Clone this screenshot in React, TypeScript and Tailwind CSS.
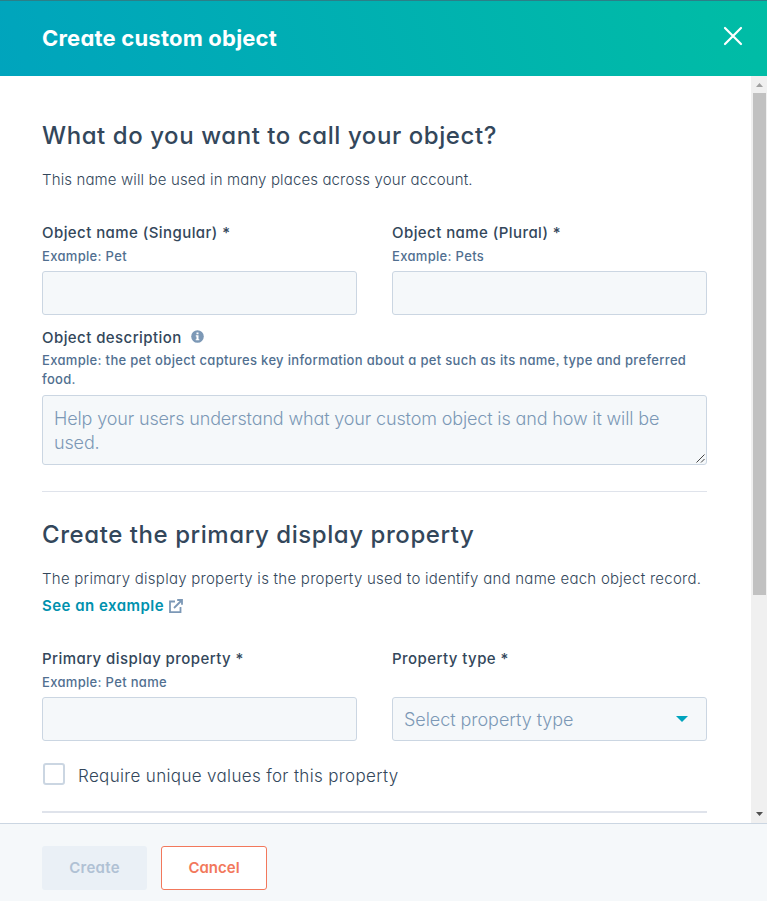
import type { ReactNode } from "react";
import cx from "clsx";

function Label(props: { children: ReactNode; className?: string }) {
  return (
    <label
      className={cx(
        "flex h-[22px] items-center whitespace-nowrap text-[15px] font-medium tracking-[0.43px] text-[#33475b]",
        props.className
      )}
    >
      {props.children}
    </label>
  );
}

function Help(props: { children: ReactNode; className?: string }) {
  return (
    <div
      className={cx(
        "whitespace-nowrap text-[13px] leading-[19px] font-medium tracking-[0.32px] text-[#516f90]",
        props.className
      )}
    >
      {props.children}
    </div>
  );
}

function Input() {
  return (
    <input className="block h-11 w-full rounded-[3px] border border-[#cbd6e2] bg-[#f5f8fa] px-[11px] outline-none" />
  );
}

function Scrollbar() {
  return (
    <div className="flex w-4 shrink-0 flex-col items-center bg-[#f0f0f0]">
      <svg width="16" height="17" viewBox="0 0 16 17">
        <path d="M5 11h7L8.500 7z" fill="#a0a0a0" />
      </svg>
      <div className="ml-px h-[502px] w-[13px] bg-[#c1c1c1]" />
      <svg className="mt-auto" width="16" height="17" viewBox="0 0 16 17">
        <path d="M5 6h7l-3.500 4z" fill="#505050" />
      </svg>
    </div>
  );
}

export default function App() {
  return (
    <div className="flex h-[901px] w-[767px] flex-col overflow-hidden bg-white font-[Inter,sans-serif] text-[#33475b] [font-feature-settings:'cv11','ss03']">
      <header className="flex h-[76px] shrink-0 items-center justify-between border-t border-[#2b7f88] bg-[linear-gradient(70deg,#00a4bd,#00bda5)] pr-6 pl-[42px] text-white">
        <h1 className="mb-0.5 text-[22px] leading-7 font-bold tracking-[0.21px] whitespace-nowrap">
          Create custom object
        </h1>
        <svg
          className="mb-[5px]"
          width="20"
          height="20"
          viewBox="0 0 20 20"
          fill="none"
          stroke="currentColor"
          strokeWidth="2.2"
          strokeLinecap="round"
        >
          <path d="M2 2l16 16M18 2L2 18" />
        </svg>
      </header>

      <div className="flex min-h-0 flex-1">
        <main className="min-w-0 flex-1 overflow-hidden pt-[45px] pr-11 pl-[42px]">
          <h2 className="text-2xl leading-[30px] font-medium tracking-[0.57px] whitespace-nowrap">
            What do you want to call your object?
          </h2>
          <p className="mt-[17px] text-[15px] leading-6 font-light tracking-[0.13px] whitespace-nowrap">
            This name will be used in many places across your account.
          </p>

          <div className="mt-[30px] grid grid-cols-2 gap-[35px]">
            <div>
              <Label>Object name (Singular) *</Label>
              <Help className="mt-[3px] mb-[5px]">Example: Pet</Help>
              <Input />
            </div>
            <div>
              <Label>Object name (Plural) *</Label>
              <Help className="mt-[3px] mb-[5px]">Example: Pets</Help>
              <Input />
            </div>
          </div>

          <Label className="mt-3 gap-[9px]">
            <span>Object description</span>
            <svg className="mb-[3px]" width="13" height="13" viewBox="0 0 13 13">
              <circle cx="6.500" cy="6.500" r="6.300" fill="#7c98b6" />
              <path
                d="M5.500 2.500h2v1.700h-2zM4.800 5.300h2.700v3.900h.8v1.100H4.700V9.200h.8V6.400h-.7z"
                fill="#fff"
              />
            </svg>
          </Label>
          <Help className="mt-0.5">
            Example: the pet object captures key information about a pet such as its name, type and preferred
            <br />
            food.
          </Help>
          <div className="relative mt-[6px] h-[70px] rounded-[3px] border border-[#cbd6e2] bg-[#f5f8fa] px-[11px] pt-[11px] text-lg leading-6 font-light tracking-[-0.14px] whitespace-nowrap text-[#7c98b6]">
            Help your users understand what your custom object is and how it will be
            <br />
            used.
            <svg
              className="absolute right-px bottom-px"
              width="9"
              height="9"
              viewBox="0 0 9 9"
              stroke="#444"
              strokeWidth="1"
            >
              <path d="M.5 8.500l8-8M5 8.500L8.500 5" />
            </svg>
          </div>

          <hr className="mt-[26px] border-[#dfe3eb]" />

          <h2 className="mt-7 text-2xl leading-[30px] font-medium tracking-[0.57px] whitespace-nowrap">
            Create the primary display property
          </h2>
          <p className="mt-[17px] text-[15px] leading-6 font-light tracking-[0.26px] whitespace-nowrap">
            The primary display property is the property used to identify and name each object record.
          </p>
          <a className="mt-[3px] flex h-6 items-center gap-[5px] text-[15px] font-semibold tracking-[0.48px] whitespace-nowrap text-[#0091ae]">
            <span>See an example</span>
            <svg
              width="14"
              height="14"
              viewBox="0 0 14 14"
              fill="none"
              stroke="#7c98b6"
              strokeWidth="1.800"
            >
              <path d="M6 2.500H1v10.600h10.500V8M5 9l7.500-7.500M8.200 1H13v4.800" />
            </svg>
          </a>

          <div className="mt-[30px] grid grid-cols-2 gap-[35px]">
            <div>
              <Label>Primary display property *</Label>
              <Help className="mt-[3px] mb-[5px]">Example: Pet name</Help>
              <Input />
            </div>
            <div>
              <Label>Property type *</Label>
              <div className="mt-[27px] flex h-11 items-center justify-between rounded-[3px] border border-[#cbd6e2] bg-[#f5f8fa] pr-[18px] pl-[11px] text-lg font-light tracking-[-0.05px] whitespace-nowrap text-[#7c98b6]">
                <span className="pt-0.5">Select property type</span>
                <svg width="12" height="6" viewBox="0 0 12 6">
                  <path d="M0 0h12L6 6z" fill="#00a4bd" />
                </svg>
              </div>
            </div>
          </div>

          <div className="mt-[22px] flex h-[22px] items-center gap-[13px] pl-px">
            <div className="size-[22px] rounded-[3px] border-2 border-[#cbd6e2] bg-white" />
            <span className="pt-[3px] text-[17px] leading-6 font-light tracking-[0.34px] whitespace-nowrap">
              Require unique values for this property
            </span>
          </div>
          <hr className="mt-[26px] border-t-2 border-[#dfe3eb]" />
        </main>
        <Scrollbar />
      </div>

      <footer className="flex h-[78px] shrink-0 items-start gap-3.5 border-t border-[#cbd6e2] bg-[#f5f8fa] pt-[22px] pl-[42px] text-[15px] font-semibold">
        <button className="h-11 w-[105px] rounded-[3px] bg-[#eaf0f6] tracking-[0.3px] text-[#b0c1d4]">
          Create
        </button>
        <button className="h-11 w-[106px] rounded-[3px] border border-[#f2785c] bg-white text-[#f2785c]">
          Cancel
        </button>
      </footer>
    </div>
  );
}
